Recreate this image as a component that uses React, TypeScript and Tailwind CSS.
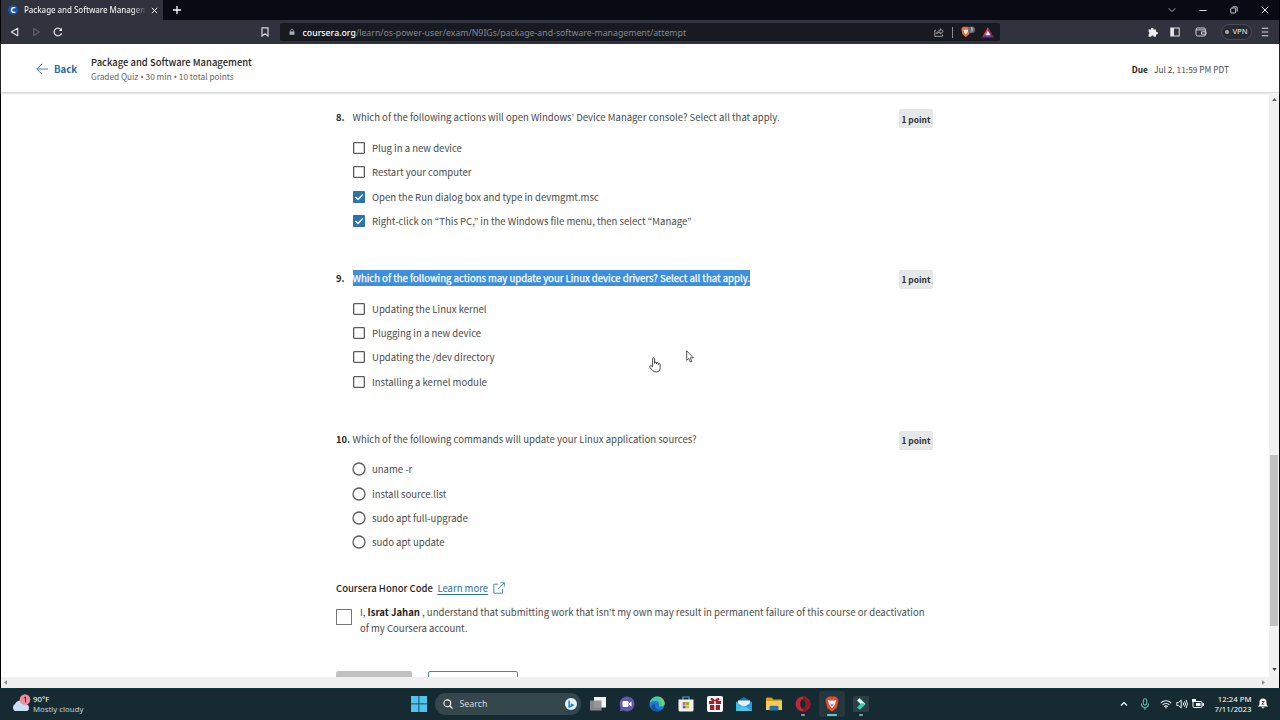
import React from "react";

type Question = {
  n: string;
  text: string;
  options: { label: string; checked?: boolean }[];
  radio?: boolean;
  selected?: boolean;
};

const questions: Question[] = [
  {
    n: "8.",
    text: "Which of the following actions will open Windows’ Device Manager console? Select all that apply.",
    options: [
      { label: "Plug in a new device" },
      { label: "Restart your computer" },
      { label: "Open the Run dialog box and type in devmgmt.msc", checked: true },
      { label: "Right-click on “This PC,” in the Windows file menu, then select “Manage”", checked: true },
    ],
  },
  {
    n: "9.",
    text: "Which of the following actions may update your Linux device drivers? Select all that apply.",
    selected: true,
    options: [
      { label: "Updating the Linux kernel" },
      { label: "Plugging in a new device" },
      { label: "Updating the /dev directory" },
      { label: "Installing a kernel module" },
    ],
  },
  {
    n: "10.",
    text: "Which of the following commands will update your Linux application sources?",
    radio: true,
    options: [
      { label: "uname -r" },
      { label: "install source.list" },
      { label: "sudo apt full-upgrade" },
      { label: "sudo apt update" },
    ],
  },
];

function Mark({ radio, checked }: { radio?: boolean; checked?: boolean }) {
  if (radio)
    return (
      <svg viewBox="0 0 14 14" className="-ml-[1.5px] h-[14px] w-[14px] shrink-0" fill="none" stroke="#5c5c5c" strokeWidth="1.3">
        <circle cx="7" cy="7" r="6" />
      </svg>
    );
  if (checked)
    return (
      <svg viewBox="0 0 12 12" className="-ml-[0.5px] h-3 w-3 shrink-0" fill="none">
        <rect width="12" height="12" rx="1" fill="#2a73b0" />
        <path d="M2.5 6 5 8.5 9.7 3.4" stroke="#fff" strokeWidth="1.5" />
      </svg>
    );
  return (
    <svg viewBox="0 0 12 12" className="-ml-[0.5px] h-3 w-3 shrink-0" fill="none" stroke="#5c5c5c" strokeWidth="1.3">
      <rect x=".65" y=".65" width="10.7" height="10.7" rx=".8" />
    </svg>
  );
}

function QuestionBlock({ q }: { q: Question }) {
  return (
    <section className="flex h-[160.7px] w-[597px] shrink-0 flex-col">
      <div className="flex h-[18px] items-center">
        <span className="w-[16.5px] shrink-0 text-[9.3px] leading-[16px] font-bold text-[#222]">{q.n}</span>
        {q.selected ? (
          <span className="h-4 bg-[#3d8fde] leading-[16px] whitespace-nowrap text-white [-webkit-text-stroke:0.25px_white]">{q.text}</span>
        ) : (
          <span className="h-4 leading-[16px] whitespace-nowrap">{q.text}</span>
        )}
        <span className="mt-[3px] ml-auto flex h-[19px] w-[34px] shrink-0 items-center justify-center rounded-[2px] bg-[#e5e7e8] text-[8.4px] font-bold text-[#333]">1 point</span>
      </div>
      <div className="mt-[9.4px] flex flex-col pl-[17px]">
        {q.options.map((o) => (
          <label key={o.label} className="flex h-[24.3px] items-center">
            <span className="flex w-[19px] shrink-0">
              <Mark radio={q.radio} checked={o.checked} />
            </span>
            <span className="leading-[16px] whitespace-nowrap">{o.label}</span>
          </label>
        ))}
      </div>
    </section>
  );
}

function BrowserChrome() {
  return (
    <div className="flex h-11 shrink-0 flex-col [font-family:'Noto_Sans',sans-serif]">
      <div className="flex h-5 bg-[#080b14]">
        <div className="flex w-[162px] items-center bg-[#30333d] pl-[7px]">
          <span className="flex h-[10px] w-[10px] items-center justify-center rounded-full bg-[#1552a8] text-[8px] leading-none font-bold text-white">C</span>
          <span className="ml-[6px] w-[123px] bg-linear-to-r from-white from-88% to-[#30333d] bg-clip-text text-[8px] leading-[14px] font-medium tracking-[-0.06px] whitespace-nowrap text-transparent">Package and Software Managem</span>
          <svg viewBox="0 0 8 8" className="ml-[4px] h-[7px] w-[7px]" stroke="#fff" strokeWidth="1.1"><path d="M1 1 7 7M7 1 1 7" /></svg>
        </div>
        <svg viewBox="0 0 8 8" className="mt-[6px] ml-[10px] h-2 w-2" stroke="#fff" strokeWidth="1.3"><path d="M4 0V8M0 4H8" /></svg>
        <div className="mr-[10px] ml-auto flex items-center gap-[23px]">
          <svg viewBox="0 0 8 8" className="h-2 w-2" fill="none" stroke="#aaa" strokeWidth="1"><path d="M.8 2.3 4 5.7 7.2 2.3" /></svg>
          <svg viewBox="0 0 8 8" className="h-2 w-2" stroke="#ddd" strokeWidth="1"><path d="M.5 4.5H7.5" /></svg>
          <svg viewBox="0 0 8 8" className="h-2 w-2" fill="none" stroke="#ccc" strokeWidth="1"><rect x=".7" y="2" width="5" height="5" rx="1" /><path d="M2.5 .8H6a1.2 1.2 0 0 1 1.2 1.2V5.5" /></svg>
          <svg viewBox="0 0 8 8" className="h-2 w-2" stroke="#eee" strokeWidth="1"><path d="M.8.8 7.2 7.2M7.2.8.8 7.2" /></svg>
        </div>
      </div>
      <div className="flex h-6 items-center bg-[#30333d]">
        <svg viewBox="0 0 10 10" className="ml-[9px] h-[10px] w-[10px]" fill="none" stroke="#e0e1e5" strokeWidth="1.1" strokeLinejoin="round"><path d="M7.7 1.2V8.8L1.3 5Z" /></svg>
        <svg viewBox="0 0 10 10" className="ml-[12px] h-[10px] w-[10px]" fill="none" stroke="#6b6e78" strokeWidth="1" strokeLinejoin="round"><path d="M1.8 1.5V8.5L7.5 5Z" /></svg>
        <svg viewBox="0 0 10 10" className="ml-[10.5px] h-[10px] w-[10px]" fill="none" stroke="#e0e1e5" strokeWidth="1.3"><path d="M8.5 6.2A3.8 3.8 0 1 1 7.8 2.5" /><path d="M9 .8V4H5.8Z" fill="#e0e1e5" stroke="none" /></svg>
        <svg viewBox="0 0 10 10" className="ml-[197.5px] h-[10px] w-[10px]" fill="none" stroke="#d5d6da" strokeWidth="1.2"><path d="M2 .8H8V9L5 6.7 2 9Z" /></svg>
        <div className="ml-[10px] flex h-[18px] w-[720px] items-center rounded-[2px] bg-[#171a21] pl-[9px]">
          <svg viewBox="0 0 8 8" className="h-2 w-[6px]"><rect x=".7" y="3.3" width="6.6" height="4.4" fill="#aaacb1" /><path d="M2.2 4V2a1.8 1.8 0 0 1 3.6 0V4" fill="none" stroke="#aaacb1" /></svg>
          <span className="mt-px ml-[7.5px] text-[8.75px] leading-[14px] whitespace-nowrap text-[#858992]"><b className="font-medium text-white">coursera.org</b>/learn/os-power-user/exam/N9IGs/package-and-software-management/attempt</span>
          <div className="mr-[6px] ml-auto flex items-center">
            <svg viewBox="0 0 10 10" className="h-[10px] w-[10px]" fill="none" stroke="#aaacb1" strokeWidth=".9"><path d="M2 3.2H.8V9.3H8.5V7.5M2.6 7C2.8 4.8 4 3.8 6.2 3.7V1.8L9.3 4.4 6.2 7V5.2C4.6 5.2 3.5 5.7 2.6 7Z" /></svg>
            <span className="ml-[8px] h-[11px] w-px bg-[#8b8d92]" />
            <svg viewBox="0 0 16 12" className="ml-[7px] h-3 w-4"><path d="M2.2 1.5 3.5.7H8.2L10 2 9.4 8 5.8 11.3 2.3 8 1.3 2.6Z" fill="#f0653a" /><path d="M3.3 3.4 5 4 5.9 3.6 6.8 4 8.3 3.4 7.3 6.6 5.8 8.8 4.3 6.6Z" fill="#fff" /><rect x="8" y=".5" width="7" height="6.6" rx="3" fill="#676b75" /><path d="M11 2.2 12 1.8V5.5" fill="none" stroke="#eee" strokeWidth=".8" /></svg>
            <svg viewBox="0 0 12 11" className="ml-[6px] h-[11px] w-3"><path d="M6 0V6L0 10.5Z" fill="#ef4b38" /><path d="M6 0V6L12 10.5Z" fill="#9e276a" /><path d="M0 10.5 6 7 12 10.5Z" fill="#6a3b9c" /><path d="M6 4 8.5 8.3H3.5Z" fill="#fff" /></svg>
          </div>
        </div>
        <div className="mr-[10px] ml-auto flex items-center">
          <svg viewBox="0 0 10 10" className="h-[10px] w-[10px]" fill="#eee"><path d="M.6 2.5H3A1.3 1.3 0 1 1 5.5 2.5H8V5A1.3 1.3 0 1 1 8 7.3V9.7H5.7A1.2 1.2 0 0 0 3.2 9.7H.6V7.2A1.2 1.2 0 0 0 .6 4.9Z" /></svg>
          <svg viewBox="0 0 10 10" className="ml-[12px] h-[10px] w-[10px]"><rect x=".8" y="1" width="8.4" height="8" fill="none" stroke="#e5e5e8" /><path d="M.8 1H4V9H.8Z" fill="#e5e5e8" /></svg>
          <svg viewBox="0 0 12 10" className="ml-[15px] h-[10px] w-3" fill="none" stroke="#d0d1d5"><rect x="1" y="1" width="9.5" height="8" rx="1.5" /><path d="M1 2.9H10.5M6.5 4.8H11V7.2H6.5Z" /></svg>
          <span className="ml-[14px] flex h-4 w-[31px] items-center justify-center gap-[3px] rounded-full border border-[#484b56] bg-[#272a33] text-[7.6px] font-medium text-[#ddd]"><i className="h-1 w-1 rounded-full bg-[#aaa]" />VPN</span>
          <svg viewBox="0 0 8 10" className="ml-[9px] h-[10px] w-2" stroke="#ddd" strokeWidth="1.1"><path d="M.8 1.2H7.2M.8 5H7.2M.8 8.8H7.2" /></svg>
        </div>
      </div>
    </div>
  );
}

function Dot() {
  return <span className="inline-block w-[7.3px] text-center [font-family:'Noto_Sans',sans-serif]">•</span>;
}

function Header() {
  return (
    <header className="flex h-[49px] shrink-0 border-b border-[#dcdcdc] bg-white pl-[35px] shadow-[0_1px_1px_#e4e4e4]">
      <svg viewBox="0 0 12 12" className="mt-[19px] h-3 w-3" fill="none" stroke="#2a73b0" strokeWidth=".9"><path d="M12 6H1M6 .8 .8 6 6 11.2" /></svg>
      <span className="mt-[17px] ml-[6px] w-[37px] text-[9.6px] leading-4 font-bold text-[#2568a5]">Back</span>
      <div className="mt-[11px] flex flex-col">
        <span className="text-[9.45px] leading-[14px] font-medium whitespace-nowrap text-[#1f1f1f]">Package and Software Management</span>
        <span className="mt-[1px] text-[8.25px] leading-[13px] whitespace-nowrap text-[#666]">Graded Quiz<Dot />30 min<Dot />10 total points</span>
      </div>
      <div className="mt-[18px] mr-[50px] ml-auto flex gap-[6px] text-[8.35px] leading-[14px] whitespace-nowrap">
        <b className="text-[#222]">Due</b>
        <span>Jul 2, 11:59 PM PDT</span>
      </div>
    </header>
  );
}

function HonorCode() {
  return (
    <div className="flex w-[600px] flex-col">
      <div className="flex h-4 items-center whitespace-nowrap">
        <span className="text-[9.5px] font-medium text-[#1f1f1f]">Coursera Honor Code</span>
        <span className="ml-[4.5px] text-[#2a6f9b] underline underline-offset-2">Learn more</span>
        <svg viewBox="0 0 12 12" className="ml-[5px] h-3 w-3" fill="none" stroke="#3c7da6" strokeWidth=".9"><path d="M5 2.2H.8V11.2H9.5V7M7.5.8H11.3V4.5M11.3.8 5 7" /></svg>
      </div>
      <div className="mt-[8px] flex">
        <span className="mt-[5px] mr-2 h-4 w-4 shrink-0 border border-[#777]" />
        <p className="leading-4 whitespace-nowrap">
          I, <b className="text-[#1f1f1f]">Israt Jahan</b> , understand that submitting work that isn’t my own may result in permanent failure of this course or deactivation<br />of my Coursera account.
        </p>
      </div>
    </div>
  );
}

function TaskIcons() {
  return (
    <div className="flex items-center gap-[13.25px]">
      <svg viewBox="0 0 16 16" className="h-4 w-4"><rect x="4" y="1" width="12" height="10.5" fill="#f2f2f2" /><rect x="0" y="4.5" width="11.5" height="10" fill="#8c9092" fillOpacity=".92" /></svg>
      <svg viewBox="0 0 16 16" className="h-4 w-4"><path d="M8 .5A7.5 7.5 0 1 1 4.5 14.6L.8 15.3 1.5 11.6A7.5 7.5 0 0 1 8 .5Z" fill="#6259ad" /><rect x="3.5" y="5" width="6" height="6" rx="1.3" fill="#fff" /><path d="M10 7.2 12.5 5.5V10.5L10 8.8Z" fill="#fff" /></svg>
      <svg viewBox="0 0 16 16" className="h-4 w-4"><circle cx="8" cy="8" r="7.6" fill="#1f79c9" /><path d="M.6 7C1.5 2.8 4.6.4 8 .4 12.6.4 15.6 3.8 15.6 7.3 15.6 10 13 10.8 11 10.5 9.6 10.3 9.6 9.5 10.2 8.9 10.4 6.3 8.2 4.9 5.8 5 3 5.1 1.2 6.1.6 7Z" fill="#40c5b1" /><path d="M8 .4C12.6.4 15.6 3.8 15.6 7.3 15.6 9 14.4 10.2 12.6 10.5 13.5 7 11.5 2 8 .4Z" fill="#79d05b" /><path d="M5.8 8C5.5 11.8 8.5 14.5 12.8 13.8 10.4 15.8 6.7 16 3.8 14.3 1.5 12 2.3 7.4 5.8 8Z" fill="#1553a2" /></svg>
      <svg viewBox="0 0 16 16" className="h-4 w-4"><path d="M5 4V1H11V4" fill="none" stroke="#4aaada" strokeWidth="1.2" /><path d="M.5 3.5H15.5V14a1.5 1.5 0 0 1-1.5 1.5H2A1.5 1.5 0 0 1 .5 14Z" fill="#f2f2ea" /><rect x="4.7" y="6" width="2.9" height="2.9" fill="#dc6843" /><rect x="8.2" y="6" width="2.9" height="2.9" fill="#7eaa3d" /><rect x="4.7" y="9.5" width="2.9" height="2.9" fill="#397cb4" /><rect x="8.2" y="9.5" width="2.9" height="2.9" fill="#ddb33c" /></svg>
      <svg viewBox="0 0 16 16" className="h-4 w-4"><rect width="16" height="16" rx="2" fill="#fff" /><path d="M2 5H7.3V8H2ZM8.7 5H14V8H8.7ZM3 9H7.3V14H3ZM8.7 9H13V14H8.7Z" fill="#a51d28" /><path d="M7.5 4.5C2.5 5 3.5 0 7.5 4.5ZM8.5 4.5C13.5 5 12.5 0 8.5 4.5Z" fill="none" stroke="#a51d28" strokeWidth="1.2" /></svg>
      <svg viewBox="0 0 16 16" className="h-4 w-4"><path d="M0 6 8 1 16 6V15H0Z" fill="#1674b7" /><path d="M2 4.5H14V10H2Z" fill="#e7f1f5" /><path d="M0 6 8 11 0 15Z" fill="#40b9e5" /><path d="M16 6 8 11 16 15Z" fill="#269dd5" /><path d="M0 15 8 9.5 16 15Z" fill="#52c7ec" /></svg>
      <svg viewBox="0 0 16 16" className="h-4 w-4"><path d="M0 2.5Q0 1.5 1 1.5H5.5L7.5 3.5H15Q16 3.5 16 4.5V14H0Z" fill="#d89d24" /><path d="M0 5H16V14H0Z" fill="#f7ca55" /><path d="M3.5 14.5V11Q3.5 9.8 5 9.8H11Q12.5 9.8 12.5 11V14.5Z" fill="#2472ac" /></svg>
      <span className="relative flex h-4 w-4">
        <svg viewBox="0 0 16 16" className="h-4 w-4"><path fillRule="evenodd" d="M8 .5A7.5 7.5 0 1 0 8 15.5 7.5 7.5 0 0 0 8 .5ZM8 3.2C10 3.2 10.8 5.5 10.8 8S10 12.8 8 12.8 5.2 10.5 5.2 8 6 3.2 8 3.2Z" fill="#c52537" /><path d="M8 .5A7.5 7.5 0 0 1 8 15.5L7.8 12.8C10 12.8 10.8 10.5 10.8 8S10 3.2 8 3.2Z" fill="#91172a" /></svg>
        <i className="absolute top-[18.5px] left-[6px] h-[1.5px] w-1 rounded-full bg-[#8f9a9d]" />
      </span>
      <span className="relative flex h-4 w-4">
        <i className="absolute -top-[5px] -left-[5px] h-[26px] w-[26px] rounded-[3px] bg-[#23373d]" />
        <svg viewBox="0 0 16 16" className="relative h-4 w-4"><path d="M3.2 1.5 5 .5H11L12.8 1.5 14.5 4 12.8 12 8 15.7 3.2 12 1.5 4Z" fill="#e9492e" /><path d="M3.8 4 7 4.8 8 4.3 9 4.8 12.2 4 11 8.5 8 12.5 5 8.5Z" fill="#fff" /><path d="M6 6 7.5 8.5 8 7.5 8.5 8.5 10 6 8.5 10H7.5Z" fill="#e9492e" /></svg>
        <i className="absolute top-[18.5px] left-[3px] h-[2px] w-[10px] rounded-full bg-[#5fd0cf]" />
      </span>
      <span className="relative flex h-4 w-4">
        <svg viewBox="0 0 16 16" className="h-4 w-4"><rect width="16" height="16" rx="1.5" fill="#2b4045" /><path d="M4 4.5 6.5 2 12.5 8 10 10.5Z" fill="#c5fff0" /><path d="M4 11.5 8.5 7 12.5 8 7 13.8Z" fill="#38cda8" /></svg>
        <i className="absolute top-[18.5px] left-[6px] h-[1.5px] w-1 rounded-full bg-[#8f9a9d]" />
      </span>
    </div>
  );
}

function Taskbar() {
  return (
    <footer className="flex h-8 shrink-0 items-center border-t border-[#0c3436] bg-[#152b31] pb-[2px] pl-[11px] text-white [font-family:'Noto_Sans',sans-serif]">
      <svg viewBox="0 0 20 20" className="mb-[2px] h-5 w-5"><path d="M4 18a4 4 0 0 1 0-7 6 6 0 0 1 11 0 3.7 3.7 0 0 1 1 7Z" fill="#c9dff4" /><circle cx="14" cy="6.5" r="5.3" fill="#f18a9c" /><path d="M12.8 5.2 14.5 4V9.2" fill="none" stroke="#5d2633" strokeWidth="1" /></svg>
      <div className="mt-px ml-[2px] w-[378px] text-[7.8px] leading-[10.5px] whitespace-nowrap"><div>90°F</div><div className="text-[#c8d0d3]">Mostly cloudy</div></div>
      <svg viewBox="0 0 16 16" className="h-4 w-4" fill="#4fc4ee"><path d="M0 0H7.5V7.5H0ZM8.3 0H16V7.5H8.3ZM0 8.3H7.5V16H0ZM8.3 8.3H16V16H8.3Z" /></svg>
      <div className="ml-[8px] flex h-[22px] w-[146px] items-center rounded-full bg-[#34474d] pl-[8px] text-[8.8px] text-[#d4dadb]">
        <svg viewBox="0 0 10 10" className="h-[10px] w-[10px]" fill="none" stroke="#fff" strokeWidth="1.1"><circle cx="4.3" cy="4.3" r="3.4" /><path d="M6.8 6.8 9.5 9.5" /></svg>
        <span className="mt-px ml-[6.5px] leading-[14px]">Search</span>
        <svg viewBox="0 0 12 12" className="mr-[4px] ml-auto h-3 w-3"><circle cx="6" cy="6" r="6" fill="#e4f5ff" /><path d="M4.2 2.5V9L8 7.2 5.8 5.8" fill="none" stroke="#1c7fc4" strokeWidth="1.5" /></svg>
      </div>
      <div className="ml-[9px]"><TaskIcons /></div>
      <div className="mr-[12.5px] ml-auto flex items-center">
        <svg viewBox="0 0 8 8" className="h-2 w-2" fill="none" stroke="#fff" strokeWidth="1.2"><path d="M1 5.5 4 2.5 7 5.5" /></svg>
        <svg viewBox="0 0 10 12" className="ml-[12px] h-3 w-[10px]" fill="none" stroke="#62b9a5" strokeWidth="1.1"><rect x="3.3" y=".8" width="3.4" height="6.2" rx="1.7" /><path d="M1.5 5.5V6a3.5 3.5 0 0 0 7 0V5.5M5 9.5V12" /></svg>
        <svg viewBox="0 0 12 10" className="ml-[10px] h-[10px] w-3" fill="none" stroke="#e8eeee" strokeWidth="1.1"><path d="M.8 4A7.3 7.3 0 0 1 11.2 4M2.5 5.9A5 5 0 0 1 9.5 5.9M4.2 7.7A2.6 2.6 0 0 1 7.8 7.7" /><circle cx="6" cy="8.8" r=".7" fill="#fff" stroke="none" /></svg>
        <svg viewBox="0 0 12 10" className="ml-[4px] h-[10px] w-3" fill="none" stroke="#e8eeee"><path d="M.8 3.5H2.5L5.2 1V9L2.5 6.5H.8ZM7 3.5Q8.2 5 7 6.5M8.5 2.2Q10.5 5 8.5 7.8M10 .8Q13 5 10 9.2" /></svg>
        <svg viewBox="0 0 12 10" className="ml-[4px] h-[10px] w-3"><rect x="1" y="2.5" width="9" height="6" rx="1.2" fill="none" stroke="#fff" /><path d="M4 4H8.5V7H4ZM10.5 4H12V7H10.5ZM0 0H4V3H0Z" fill="#fff" /></svg>
        <div className="mt-px ml-[8px] w-[40px] text-right text-[7.8px] leading-[10.5px] whitespace-nowrap"><div>12:24 PM</div><div>7/11/2023</div></div>
        <svg viewBox="0 0 10 11" className="ml-[6px] h-[11px] w-[10px]"><path d="M0 8.5 1.5 6.5V4A3.5 3.5 0 0 1 8.5 4V6.5L10 8.5Z" fill="#fff" /><path d="M3.4 9.3H6.6Q5 11.5 3.4 9.3Z" fill="#fff" /><path d="M3.8 3.5H6.2L3.8 6.2H6.3" fill="none" stroke="#152b31" strokeWidth=".8" /></svg>
      </div>
    </footer>
  );
}

export default function App() {
  return (
    <div className="relative flex h-[720px] w-[1280px] flex-col overflow-hidden bg-white text-[9.55px] text-[#4a4a4a] [font-family:'Noto_Sans_CJK_KR',sans-serif]">
      <div className="flex h-[688px] flex-col border-x border-black">
        <BrowserChrome />
        <Header />
        <div className="flex h-[584px] overflow-hidden">
          <main className="flex w-[1268px] flex-col pt-[15.4px] pl-[335px]">
            {questions.map((q) => <QuestionBlock key={q.n} q={q} />)}
            <div className="-mt-[10.5px]"><HonorCode /></div>
            <div className="mt-[35px] flex gap-4">
              <div className="h-8 w-[76px] shrink-0 rounded-[2px] bg-[#c1c1c1]" />
              <div className="h-8 w-[90px] shrink-0 rounded-[2px] border border-[#4c84a8]" />
            </div>
          </main>
          <div className="flex w-[10px] flex-col items-center bg-[#f1f1f1]">
            <svg viewBox="0 0 6 4" className="mt-[5px] h-[3px] w-[5px]"><path d="M0 4 3 0 6 4Z" fill="#555" /></svg>
            <div className="mt-[354px] h-[171px] w-2 bg-[#c1c1c1]" />
            <svg viewBox="0 0 6 4" className="mt-[42px] h-[3px] w-[5px]"><path d="M0 0 3 4 6 0Z" fill="#444" /></svg>
          </div>
        </div>
        <div className="flex h-[11px] shrink-0 items-center bg-[#f0f0f1] pr-[14px] pl-[3px]">
          <svg viewBox="0 0 4 6" className="h-[5px] w-[3px]"><path d="M4 0 0 3 4 6Z" fill="#888" /></svg>
          <svg viewBox="0 0 4 6" className="ml-auto h-[5px] w-[3px]"><path d="M0 0 4 3 0 6Z" fill="#888" /></svg>
        </div>
      </div>
      <Taskbar />
      <svg viewBox="0 0 12 16" className="absolute top-[357px] left-[649px] h-4 w-3" fill="#fff" stroke="#333" strokeWidth=".9" strokeLinejoin="round"><path d="M3.6 9.8V1.7a1 1 0 0 1 2 0V6.5 6a.9.9 0 0 1 1.9 0V7 6.5a.9.9 0 0 1 1.8 0V7.5a.9.9 0 0 1 1.9 0V10.5C11.2 13 9.8 15 7.2 15 4.6 15 3.3 13.2.7 10.2.4 9.3 1.4 8.5 2.3 8.9Z" /></svg>
      <svg viewBox="0 0 8 13" className="absolute top-[350px] left-[686px] h-[13px] w-2" fill="#fff" stroke="#444" strokeWidth=".9"><path d="M.7.8V10.3L2.8 8.3 4.3 12 5.8 11.4 4.3 7.8H7.4Z" /></svg>
    </div>
  );
}
